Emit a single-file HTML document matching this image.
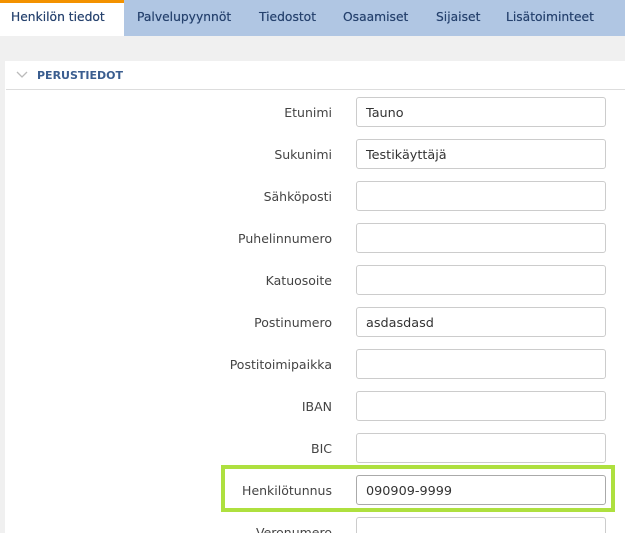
<!DOCTYPE html>
<html><head><meta charset="utf-8"><style>
*{box-sizing:border-box;margin:0;padding:0}
html,body{width:625px;height:533px;overflow:hidden}
body{background:#f0f0f0;font-family:"DejaVu Sans","Liberation Sans",sans-serif;position:relative}
.tabs{position:absolute;left:0;top:0;width:625px;height:36px;background:#b0c6e3}
.tab{position:absolute;top:0;height:36px;line-height:34px;font-size:12.3px;color:#26426e;white-space:nowrap;text-shadow:0 0 0.4px #26426e}
.active{left:0;width:124px;background:#fff;border-top:3px solid #f39200;line-height:28px;padding-left:11px}
.panel{position:absolute;left:5px;top:61px;width:620px;height:472px;background:#fff}
.hdr{position:absolute;left:1px;top:0;width:619px;height:29px;border-bottom:1px solid #ddd}
.hdr span{position:absolute;left:31px;top:8px;font-size:11px;font-weight:bold;color:#3a5d8f}
.chev{position:absolute;left:10px;top:10px}
.lbl{position:absolute;right:293px;font-size:12.5px;color:#444;text-align:right;white-space:nowrap}
.inp{position:absolute;left:356px;width:250px;height:30px;border:1px solid #ccc;border-radius:3px;background:#fff;font-size:12.8px;color:#333;padding-left:9px;line-height:31px}
.green{position:absolute;left:221px;top:465px;width:394px;height:47px;border:4px solid #aee03f}
</style></head><body>
<div class="tabs">
<div class="tab active">Henkilön tiedot</div>
<div class="tab" style="left:137px">Palvelupyynnöt</div>
<div class="tab" style="left:259px">Tiedostot</div>
<div class="tab" style="left:343px">Osaamiset</div>
<div class="tab" style="left:436px">Sijaiset</div>
<div class="tab" style="left:506px">Lisätoiminteet</div>
</div>
<div class="panel"><div class="hdr"><svg class="chev" width="12" height="8" viewBox="0 0 12 8"><path d="M1 1 L6 6 L11 1" fill="none" stroke="#bbb" stroke-width="1.3"/></svg><span>PERUSTIEDOT</span></div></div>
<div class="green"></div>
<div class="lbl" style="top:105px">Etunimi</div><div class="inp" style="top:97px">Tauno</div>
<div class="lbl" style="top:147px">Sukunimi</div><div class="inp" style="top:139px">Testikäyttäjä</div>
<div class="lbl" style="top:189px">Sähköposti</div><div class="inp" style="top:181px"></div>
<div class="lbl" style="top:231px">Puhelinnumero</div><div class="inp" style="top:223px"></div>
<div class="lbl" style="top:273px">Katuosoite</div><div class="inp" style="top:265px"></div>
<div class="lbl" style="top:315px">Postinumero</div><div class="inp" style="top:307px">asdasdasd</div>
<div class="lbl" style="top:357px">Postitoimipaikka</div><div class="inp" style="top:349px"></div>
<div class="lbl" style="top:399px">IBAN</div><div class="inp" style="top:391px"></div>
<div class="lbl" style="top:441px">BIC</div><div class="inp" style="top:433px"></div>
<div class="lbl" style="top:483px">Henkilötunnus</div><div class="inp" style="top:475px;border-color:#aaa">090909-9999</div>
<div class="lbl" style="top:525px">Veronumero</div><div class="inp" style="top:517px"></div>
</body></html>
